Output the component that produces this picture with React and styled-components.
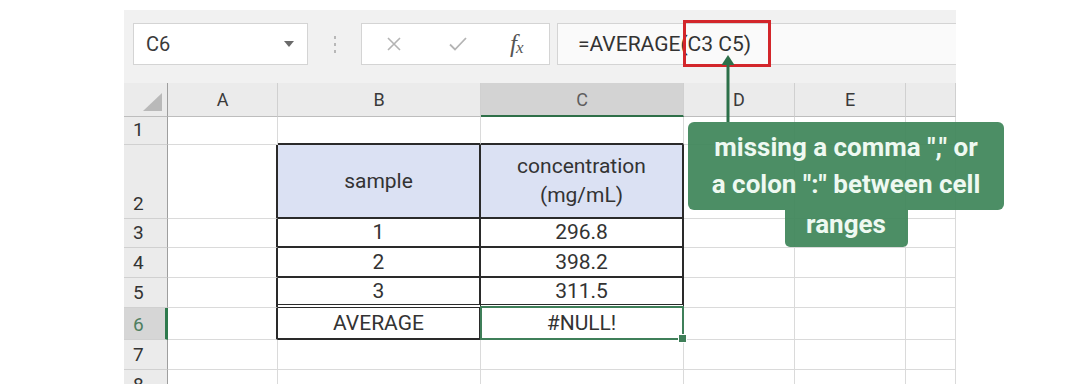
import React from 'react'
import styled, { createGlobalStyle } from 'styled-components'

const GlobalStyle = createGlobalStyle`
  html, body {
    margin: 0;
    padding: 0;
    background: #ffffff;
  }
  body {
    font-family: "Roboto", "Liberation Sans", sans-serif;
    color: #333;
  }
`

const Stage = styled.div`
  width: 1080px;
  height: 392px;
  overflow: hidden;
  background: #fff;
  padding: 10px 0 0 124px;
  box-sizing: border-box;
`

const Frame = styled.div`
  position: relative;
  width: 832px;
`

const Window = styled.div`
  width: 832px;
  height: 374px;
  overflow: hidden;
  background: #f1f1f1;
`

const Toolbar = styled.div`
  display: flex;
  align-items: center;
  height: 73px;
  padding: 13px 0 18px 9px;
  box-sizing: border-box;
`

const NameBox = styled.div`
  display: flex;
  align-items: center;
  justify-content: space-between;
  width: 175px;
  height: 42px;
  box-sizing: border-box;
  padding: 0 12px 0 12px;
  background: #fff;
  border: 1px solid #d4d4d4;
  font-size: 20px;
  color: #3a3a3a;
`

const Caret = styled.span`
  width: 0;
  height: 0;
  border-left: 5px solid transparent;
  border-right: 5px solid transparent;
  border-top: 6px solid #6a6a6a;
  margin-right: 1px;
`

const Grip = styled.div`
  width: 53px;
  display: flex;
  flex-direction: column;
  align-items: center;
  gap: 4px;

  span {
    width: 2px;
    height: 3px;
    background: #b8b8b8;
  }
`

const FxBox = styled.div`
  display: flex;
  align-items: center;
  width: 189px;
  height: 42px;
  box-sizing: border-box;
  background: #fff;
  border: 1px solid #d4d4d4;
  padding-left: 24px;
  gap: 46px;
  margin-right: 7px;
`

const FxLabel = styled.span`
  font-family: "Liberation Serif", serif;
  font-style: italic;
  font-size: 25px;
  color: #555;
  letter-spacing: -1px;
  margin-left: -4px;

  sub {
    font-size: 17px;
    vertical-align: -1px;
  }
`

const FormulaBox = styled.div`
  flex: 1;
  height: 42px;
  box-sizing: border-box;
  display: flex;
  align-items: center;
  padding-left: 20px;
  background: #fafafa;
  border: 1px solid #d4d4d4;
  border-right: none;
  font-size: 21px;
  color: #333;
`

const Grid = styled.div`
  display: grid;
  grid-template-columns: 44px 110px 203px 203px 111px 111px 1fr;
  grid-template-rows: 34px 28px 74px 29px 30px 30px 32px 30px 30px;
  background: #fff;
`

const ColHead = styled.div`
  display: flex;
  align-items: center;
  justify-content: center;
  background: ${p => (p.$active ? '#d3d3d3' : '#ebebeb')};
  border-right: 1px solid #d0d0d0;
  border-bottom: ${p => (p.$active ? '2px solid #2e6f48' : '1px solid #bdbdbd')};
  font-size: 18px;
  color: ${p => (p.$active ? '#5e5e5e' : '#3a3a3a')};
`

const Corner = styled.div`
  background: #ebebeb;
  border-right: 1px solid #9e9e9e;
  border-bottom: 1px solid #bdbdbd;
  display: flex;
  align-items: flex-end;
  justify-content: flex-end;
  padding: 0 5px 5px 0;
`

const SelectAll = styled.span`
  width: 0;
  height: 0;
  border-left: 19px solid transparent;
  border-bottom: 18px solid #b9b9b9;
`

const RowHead = styled.div`
  display: flex;
  align-items: flex-end;
  padding: 0 0 1px 9px;
  background: ${p => (p.$active ? '#d6d6d6' : '#ebebeb')};
  border-right: ${p => (p.$active ? '3px solid #2e7a4d' : '1px solid #9e9e9e')};
  border-bottom: 1px solid #d0d0d0;
  font-size: 19px;
  line-height: 26px;
  color: ${p => (p.$active ? '#4f7f60' : '#333')};
`

const Cell = styled.div`
  position: relative;
  display: flex;
  flex-direction: column;
  align-items: center;
  justify-content: center;
  background: ${p => p.$fill || '#fff'};
  border-right: ${p => p.$right || '1px solid #dadada'};
  border-bottom: ${p => p.$bottom || '1px solid #dadada'};
  font-size: 21px;
  line-height: 29px;
  color: #333;
  white-space: nowrap;

  ${p =>
    p.$selected &&
    `
    &::after {
      content: "";
      position: absolute;
      left: -1px;
      top: -2px;
      right: -2px;
      bottom: -2px;
      border: 2px solid #3f7f59;
    }
    &::before {
      content: "";
      position: absolute;
      right: -5px;
      bottom: -5px;
      width: 7px;
      height: 7px;
      background: #3f7f59;
      border: 1px solid #fff;
      z-index: 1;
    }
  `}
`

const RedBox = styled.div`
  position: absolute;
  left: 559px;
  top: 10px;
  width: 88px;
  height: 47px;
  box-sizing: border-box;
  border: 3px solid #d3262b;
`

const Pointer = styled.svg`
  position: absolute;
  left: 596px;
  top: 45px;
`

const Callout = styled.div`
  position: absolute;
  left: 564px;
  top: 112px;
  width: 316px;
  display: flex;
  flex-direction: column;
  align-items: center;
  font-weight: 700;
  font-size: 26px;
  color: #eef9f1;
  text-align: center;
  white-space: nowrap;
`

const CalloutBody = styled.div`
  width: 100%;
  box-sizing: border-box;
  padding: 7px 0 7px;
  background: rgba(62, 133, 89, 0.93);
  border-radius: 6px;
  line-height: 37px;
`

const CalloutTab = styled.div`
  width: 123px;
  height: 37px;
  line-height: 28px;
  background: rgba(62, 133, 89, 0.93);
  border-radius: 0 0 5px 5px;
`

const cols = ['A', 'B', 'C', 'D', 'E', '']

const data = [
  { n: 1 },
  { n: 2, b: 'sample', c: ['concentration', '(mg/mL)'], head: true },
  { n: 3, b: '1', c: ['296.8'] },
  { n: 4, b: '2', c: ['398.2'] },
  { n: 5, b: '3', c: ['311.5'], dbl: true },
  { n: 6, b: 'AVERAGE', c: ['#NULL!'], active: true },
  { n: 7 },
  { n: 8 },
]

const BLACK = '2px solid #2a2a2a'

const Row = ({ row }) => {
  const inTable = row.b !== undefined
  const bottom = row.dbl ? '4px double #2a2a2a' : BLACK
  const fill = row.head ? '#dbe1f3' : '#fff'
  return (
    <>
      <RowHead $active={row.active}>{row.n}</RowHead>
      <Cell $right={inTable ? BLACK : undefined} />
      {inTable ? (
        <>
          <Cell $right={BLACK} $bottom={bottom} $fill={fill}>{row.b}</Cell>
          <Cell $right={BLACK} $bottom={bottom} $fill={fill} $selected={row.active}>
            {row.c.map(t => <span key={t}>{t}</span>)}
          </Cell>
        </>
      ) : (
        <>
          <Cell $bottom={row.n === 1 ? BLACK : undefined} />
          <Cell $bottom={row.n === 1 ? BLACK : undefined} />
        </>
      )}
      <Cell />
      <Cell />
      <Cell />
    </>
  )
}

export default function App() {
  return (
    <Stage>
      <GlobalStyle />
      <Frame>
        <Window>
          <Toolbar>
            <NameBox>
              C6
              <Caret />
            </NameBox>
            <Grip>
              <span />
              <span />
              <span />
            </Grip>
            <FxBox>
              <svg width="16" height="16" viewBox="0 0 16 16">
                <path d="M2 2 L14 14 M14 2 L2 14" stroke="#b4b4b4" strokeWidth="1.6" fill="none" />
              </svg>
              <svg width="20" height="16" viewBox="0 0 20 16">
                <path d="M2 8.5 L7 13.5 L18 2" stroke="#b4b4b4" strokeWidth="1.8" fill="none" />
              </svg>
              <FxLabel>
                f<sub>x</sub>
              </FxLabel>
            </FxBox>
            <FormulaBox>=AVERAGE(C3 C5)</FormulaBox>
          </Toolbar>
          <Grid>
            <Corner>
              <SelectAll />
            </Corner>
            {cols.map(c => (
              <ColHead key={c || 'F'} $active={c === 'C'}>{c}</ColHead>
            ))}
            {data.map(r => (
              <Row key={r.n} row={r} />
            ))}
          </Grid>
        </Window>
        <RedBox />
        <Pointer width="16" height="67" viewBox="0 0 16 67">
          <line x1="8" y1="8" x2="8" y2="67" stroke="#2c7049" strokeWidth="3" />
          <polygon points="8,0 1.5,10 14.5,10" fill="#2c7049" />
        </Pointer>
        <Callout>
          <CalloutBody>
            missing a comma "," or
            <br />
            a colon ":" between cell
          </CalloutBody>
          <CalloutTab>ranges</CalloutTab>
        </Callout>
      </Frame>
    </Stage>
  )
}
